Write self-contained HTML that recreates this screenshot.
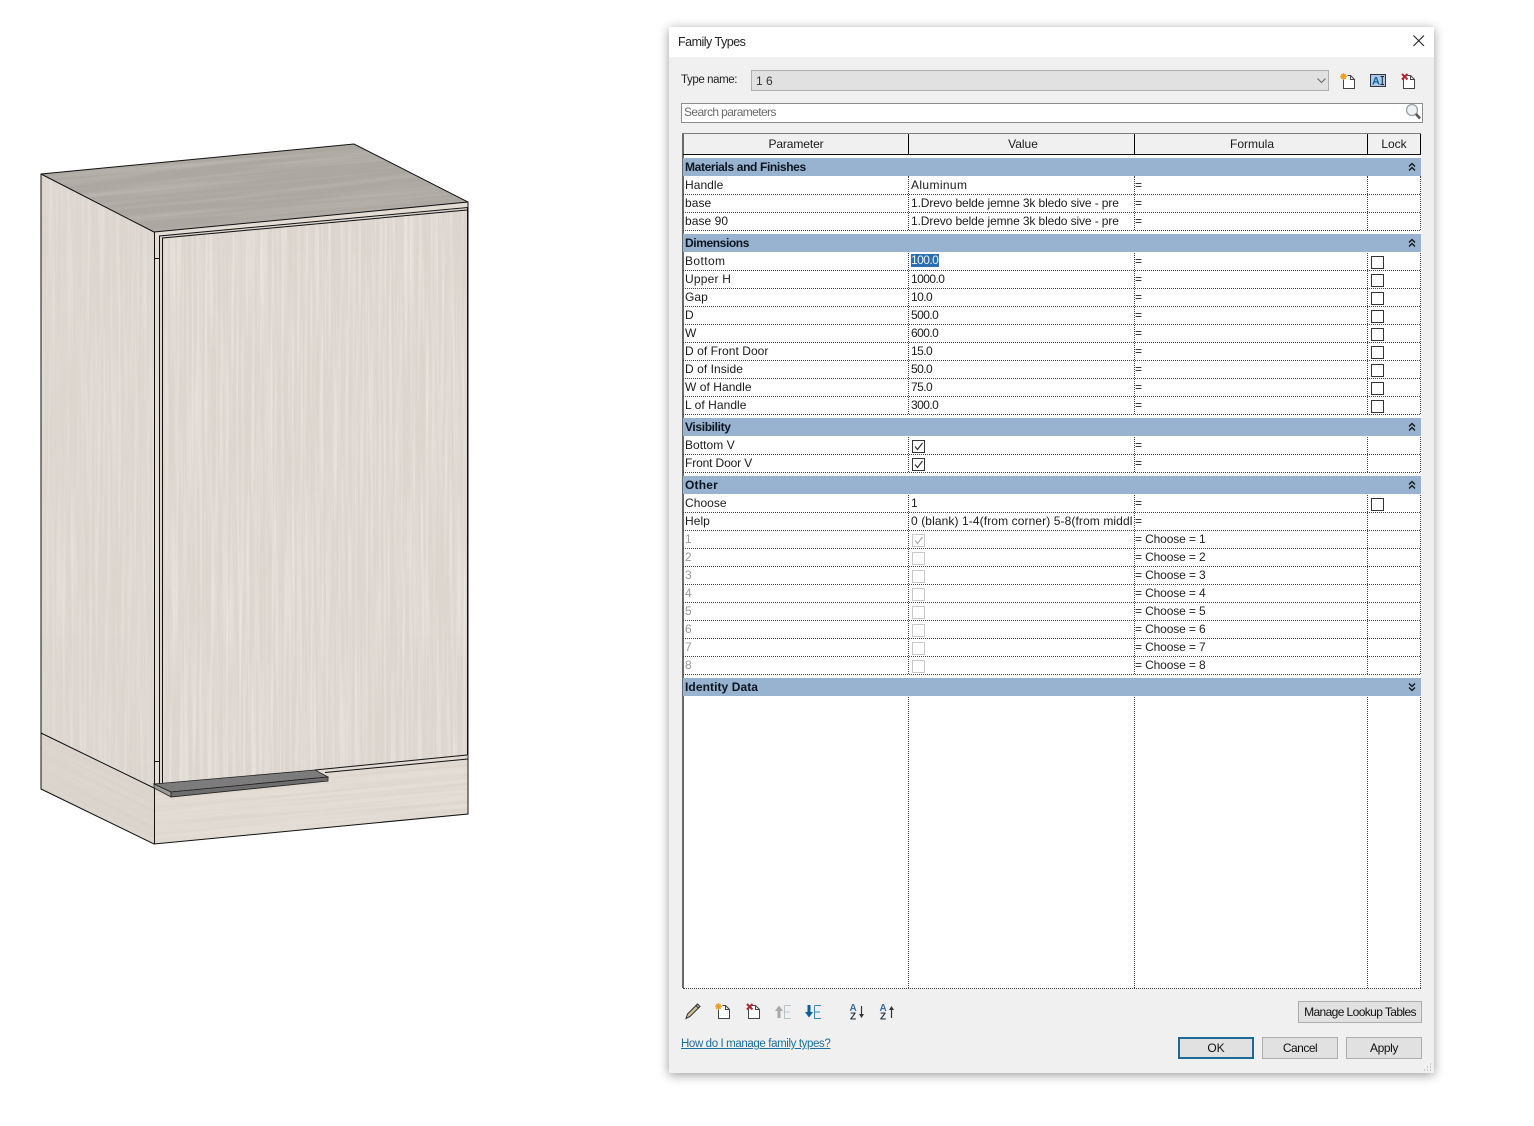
<!DOCTYPE html>
<html><head><meta charset="utf-8"><title>Family Types</title>
<style>
html,body{margin:0;padding:0;background:#fff;width:1534px;height:1126px;overflow:hidden}
body{font-family:"Liberation Sans",sans-serif;font-size:12px;color:#1a1a1a;position:relative}
.a{position:absolute;white-space:nowrap}
#dlg{position:absolute;left:669px;top:27px;width:765px;height:1046px;background:#f0f0f0;box-shadow:0 2px 10px rgba(0,0,0,.4)}
#tb{position:absolute;left:669px;top:27px;width:765px;height:30px;background:#fff}
.bar{position:absolute;left:683px;width:738px;height:18px;background:#98b3cf;font-weight:bold;line-height:18px;text-indent:2px;color:#0c1420;letter-spacing:-.36px}
.r{position:absolute;left:683px;width:737px;height:18px;line-height:18px;border-bottom:1px dotted #444}
.r span{position:absolute;top:0;white-space:nowrap;letter-spacing:.05px}
.p{left:2px}.v{left:228px}.f{left:452px}
.r span.n{letter-spacing:-.55px}
.r span.m{letter-spacing:-.11px}
.r span.t{letter-spacing:-.13px}
.g span{color:#999}.r.g span.f{color:#222;letter-spacing:-.13px}
.vl{position:absolute;top:176px;height:812px;border-left:1px dotted #444}
.h{position:absolute;top:134px;height:20px;line-height:20px;text-align:center;background:#f0f0f0;border-right:1px solid #000;box-sizing:border-box}
.cb{position:absolute;width:11px;height:11px;border:1px solid #333;background:#fff}
.cb.d{border-color:#c8c8c8}
.cb svg{position:absolute;left:0;top:0}
.btn{position:absolute;background:#e1e1e1;border:1px solid #adadad;box-sizing:border-box;text-align:center;color:#111;white-space:nowrap}
</style></head><body>

<svg class="a" style="left:0;top:0" width="660" height="900" viewBox="0 0 660 900">
<defs>
<filter id="wv" x="0" y="0" width="100%" height="100%"><feTurbulence type="fractalNoise" baseFrequency="0.38 0.006" numOctaves="3" seed="5"/><feColorMatrix values="0 0 0 0 .96  0 0 0 0 .93  0 0 0 0 .89  2 0 0 0 -.8"/></filter>
<filter id="wd" x="0" y="0" width="100%" height="100%"><feTurbulence type="fractalNoise" baseFrequency="0.25 0.004" numOctaves="2" seed="17"/><feColorMatrix values="0 0 0 0 .68  0 0 0 0 .63  0 0 0 0 .58  2 0 0 0 -.85"/></filter>
<filter id="wh" x="0" y="0" width="100%" height="100%"><feTurbulence type="fractalNoise" baseFrequency="0.005 0.3" numOctaves="3" seed="9"/><feColorMatrix values="0 0 0 0 .66  0 0 0 0 .61  0 0 0 0 .54  2.2 0 0 0 -.85"/></filter>
<filter id="wt" x="0" y="0" width="100%" height="100%"><feTurbulence type="fractalNoise" baseFrequency="0.005 0.25" numOctaves="2" seed="3"/><feColorMatrix values="0 0 0 0 .76  0 0 0 0 .73  0 0 0 0 .69  2 0 0 0 -.85"/></filter>
<clipPath id="cs"><polygon points="41,174 154,232 154,788 41,733"/></clipPath>
<clipPath id="cf"><polygon points="162,238 467,210 467,756 162,784"/></clipPath>
<clipPath id="cb"><polygon points="154,787 468,757 468,814 154,844"/></clipPath>
<clipPath id="cl"><polygon points="41,733 154,788 154,844 41,789"/></clipPath>
<clipPath id="ct"><polygon points="41,174 354,144 468,202 154,232"/></clipPath>
</defs>
<polygon points="41,174 354,144 468,202 154,232" fill="#aca8a1"/>
<polygon points="41,174 154,232 154,844 41,789" fill="#dcd6cf"/>
<polygon points="154,232 468,202 468,814 154,844" fill="#e3ddd5"/>
<polygon points="160,236 467,208 467,756 160,785" fill="#dcd6cf"/>
<g clip-path="url(#ct)"><rect x="0" y="0" width="430" height="72" transform="translate(41 174) skewY(-5.4)" filter="url(#wt)" opacity=".3"/></g>
<g clip-path="url(#cs)"><rect x="41" y="174" width="113" height="620" filter="url(#wv)" opacity=".35"/><rect x="41" y="174" width="113" height="620" filter="url(#wd)" opacity=".15"/></g>
<g clip-path="url(#cf)"><rect x="160" y="207" width="308" height="582" filter="url(#wv)" opacity=".5"/><rect x="160" y="207" width="308" height="582" filter="url(#wd)" opacity=".22"/></g>
<g clip-path="url(#cb)"><rect x="0" y="0" width="316" height="60" transform="translate(154 786) skewY(-5.4)" filter="url(#wh)" opacity=".55"/></g>
<g clip-path="url(#cl)"><rect x="0" y="-5" width="114" height="65" transform="translate(41 733) skewY(26.500)" filter="url(#wh)" opacity=".5"/></g>
<g fill="none" stroke="#111" stroke-width="1">
<polygon points="41,174 354,144 468,202 468,814 154,844 41,789"/>
<line x1="41" y1="174" x2="154" y2="232"/>
<line x1="154" y1="232" x2="468" y2="202"/>
<line x1="154.500" y1="232" x2="154.500" y2="844"/>
<line x1="41" y1="733" x2="154" y2="788"/>
<polyline points="159.500,785 159.500,236 467.500,207.500 467.500,755"/>
<polyline points="162.500,783 162.500,238 467,210"/>
<line x1="154" y1="258.500" x2="159" y2="258.500"/>
<line x1="154" y1="761.500" x2="159" y2="761.500"/>
<line x1="315" y1="770" x2="467" y2="755"/>
<line x1="325" y1="772.500" x2="468" y2="759"/>
</g>
<polygon points="154,784 315,770 328,777 171,792" fill="#7c7c7c" stroke="#222" stroke-width=".8"/>
<polygon points="154,784 171,792 171,797 154,788" fill="#9a9a96" stroke="#222" stroke-width=".8"/>
<polygon points="171,792 328,777 328,781 171,797" fill="#6d6d6d" stroke="#222" stroke-width=".8"/>
</svg>

<div id="dlg"></div>
<div id="tb"></div>
<div class="a" style="left:678px;top:34px;line-height:16px;font-size:12.500px;color:#222;letter-spacing:-.5px">Family Types</div>
<svg class="a" style="left:1412px;top:34px" width="14" height="14"><path d="M1.500 1.500 12 12M12 1.500 1.500 12" stroke="#222" stroke-width="1.100"/></svg>

<div class="a" style="left:681px;top:72px;line-height:16px;font-size:11.500px;color:#222;letter-spacing:-.4px">Type name:</div>
<div class="a" style="left:751px;top:70px;width:578px;height:21px;background:#e1e1e1;border:1px solid #adadad;box-sizing:border-box;line-height:20px;text-indent:4px;color:#333">1 6</div>
<svg class="a" style="left:1316px;top:76px" width="12" height="10"><path d="M1.500 2.500 5.500 6.500 9.500 2.500" fill="none" stroke="#666"/></svg>

<svg class="a" style="left:1339px;top:72px" width="18" height="18"><path d="M4.500 6.500V16.500H15.500V7.500L11.500 3.500H8.500M11.500 3.500V7.500H15.500" fill="#fff" stroke="#444"/><circle cx="4.500" cy="4.500" r="3" fill="#f4b64a"/><path d="M1 4.500H8M4.500 1V8M2 2 7 7M7 2 2 7" stroke="#e79a2a" stroke-width=".8"/></svg>
<svg class="a" style="left:1369px;top:72px" width="18" height="16"><rect x="1.500" y="2.500" width="15" height="12" fill="#a9cbe8" stroke="#334"/><text x="3" y="12.500" font-family="Liberation Sans" font-weight="bold" font-size="11" fill="#16609c">A</text><path d="M11.500 4.500H15M13.250 4.500V12.500M11.500 12.500H15" stroke="#222" fill="none"/></svg>
<svg class="a" style="left:1399px;top:72px" width="18" height="18"><path d="M4.500 6.500V16.500H15.500V7.500L11.500 3.500H8.500M11.500 3.500V7.500H15.500" fill="#fff" stroke="#444"/><path d="M3 2 8.500 7.500M8.500 2 3 7.500" stroke="#b3242c" stroke-width="2"/></svg>

<div class="a" style="left:681px;top:103px;width:742px;height:20px;background:#fff;border:1px solid #8c8c8c;box-sizing:border-box;line-height:17px;text-indent:2px;color:#6b6b6b;letter-spacing:-.6px">Search parameters</div>
<svg class="a" style="left:1404px;top:103px" width="18" height="18"><circle cx="8" cy="7" r="5.500" fill="#eef2f4" stroke="#9aa2a8" stroke-width="1.300"/><path d="M12 11 16 15.500" stroke="#555" stroke-width="2.600"/></svg>

<div class="a" style="left:682px;top:133px;width:739px;height:855px;background:#fff;box-sizing:border-box;border-left:2px solid #6a6a6a;border-top:2px solid #7c7c7c"></div>
<div class="a" style="left:1420px;top:176px;height:812px;border-left:1px dotted #444"></div>
<div class="a" style="left:683px;top:988px;width:738px;border-top:1px dotted #444"></div>

<div class="h" style="left:684px;width:225px;letter-spacing:-.1px">Parameter</div>
<div class="h" style="left:909px;width:228px;border-right:0">Value</div>
<div class="h" style="left:1135px;width:233px;padding-left:2px">Formula</div>
<div class="h" style="left:1368px;width:53px">Lock</div>
<div class="a" style="left:1134px;top:134px;width:1px;height:20px;background:#000"></div>
<div class="a" style="left:683px;top:154px;width:738px;height:1px;background:#111"></div>

<div class="vl" style="left:908px"></div>
<div class="vl" style="left:1134px"></div>
<div class="vl" style="left:1367px"></div>

<div class="bar" style="top:158px">Materials and Finishes</div>
<div class="r" style="top:176px"><span class="p">Handle</span><span class="v" style="letter-spacing:.37px">Aluminum</span><span class="f">=</span></div>
<div class="r" style="top:194px"><span class="p">base</span><span class="v m">1.Drevo belde jemne 3k bledo sive - pre</span><span class="f">=</span></div>
<div class="r" style="top:212px"><span class="p">base 90</span><span class="v m">1.Drevo belde jemne 3k bledo sive - pre</span><span class="f">=</span></div>

<div class="bar" style="top:234px;letter-spacing:-.4px">Dimensions</div>
<div class="r" style="top:252px"><span class="p" style="letter-spacing:.4px">Bottom</span><span class="v n" style="background:#2a6fb0;color:#e8f0f8;top:2px;height:13px;line-height:13px;padding-right:1px">100.0</span><span class="f">=</span></div>
<div class="r" style="top:270px"><span class="p" style="letter-spacing:.2px">Upper H</span><span class="v n">1000.0</span><span class="f">=</span></div>
<div class="r" style="top:288px"><span class="p">Gap</span><span class="v n">10.0</span><span class="f">=</span></div>
<div class="r" style="top:306px"><span class="p">D</span><span class="v n">500.0</span><span class="f">=</span></div>
<div class="r" style="top:324px"><span class="p">W</span><span class="v n">600.0</span><span class="f">=</span></div>
<div class="r" style="top:342px"><span class="p">D of Front Door</span><span class="v n">15.0</span><span class="f">=</span></div>
<div class="r" style="top:360px"><span class="p">D of Inside</span><span class="v n">50.0</span><span class="f">=</span></div>
<div class="r" style="top:378px"><span class="p">W of Handle</span><span class="v n">75.0</span><span class="f">=</span></div>
<div class="r" style="top:396px"><span class="p">L of Handle</span><span class="v n">300.0</span><span class="f">=</span></div>

<div class="bar" style="top:418px">Visibility</div>
<div class="r" style="top:436px"><span class="p">Bottom V</span><span class="f">=</span></div>
<div class="r" style="top:454px"><span class="p t">Front Door V</span><span class="f">=</span></div>

<div class="bar" style="top:476px;letter-spacing:.2px">Other</div>
<div class="r" style="top:494px"><span class="p">Choose</span><span class="v">1</span><span class="f">=</span></div>
<div class="r" style="top:512px"><span class="p">Help</span><span class="v" style="letter-spacing:.1px">0 (blank) 1-4(from corner) 5-8(from middl</span><span class="f">=</span></div>
<div class="r g" style="top:530px"><span class="p">1</span><span class="f">= Choose = 1</span></div>
<div class="r g" style="top:548px"><span class="p">2</span><span class="f">= Choose = 2</span></div>
<div class="r g" style="top:566px"><span class="p">3</span><span class="f">= Choose = 3</span></div>
<div class="r g" style="top:584px"><span class="p">4</span><span class="f">= Choose = 4</span></div>
<div class="r g" style="top:602px"><span class="p">5</span><span class="f">= Choose = 5</span></div>
<div class="r g" style="top:620px"><span class="p">6</span><span class="f">= Choose = 6</span></div>
<div class="r g" style="top:638px"><span class="p">7</span><span class="f">= Choose = 7</span></div>
<div class="r g" style="top:656px"><span class="p">8</span><span class="f">= Choose = 8</span></div>

<div class="bar" style="top:678px;letter-spacing:.08px">Identity Data</div>

<div class="a" style="left:684px;top:231px;width:737px;height:3px;background:#fff"></div>
<div class="a" style="left:684px;top:415px;width:737px;height:3px;background:#fff"></div>
<div class="a" style="left:684px;top:473px;width:737px;height:3px;background:#fff"></div>
<div class="a" style="left:684px;top:675px;width:737px;height:3px;background:#fff"></div>

<svg class="a" style="left:1407px;top:162px" width="10" height="10"><path d="M2 4.500 5 1.500 8 4.500M2 8.500 5 5.500 8 8.500" fill="none" stroke="#111" stroke-width="1.300"/></svg>
<svg class="a" style="left:1407px;top:238px" width="10" height="10"><path d="M2 4.500 5 1.500 8 4.500M2 8.500 5 5.500 8 8.500" fill="none" stroke="#111" stroke-width="1.300"/></svg>
<svg class="a" style="left:1407px;top:422px" width="10" height="10"><path d="M2 4.500 5 1.500 8 4.500M2 8.500 5 5.500 8 8.500" fill="none" stroke="#111" stroke-width="1.300"/></svg>
<svg class="a" style="left:1407px;top:480px" width="10" height="10"><path d="M2 4.500 5 1.500 8 4.500M2 8.500 5 5.500 8 8.500" fill="none" stroke="#111" stroke-width="1.300"/></svg>
<svg class="a" style="left:1407px;top:682px" width="10" height="10"><path d="M2 1.500 5 4.500 8 1.500M2 5.500 5 8.500 8 5.500" fill="none" stroke="#111" stroke-width="1.300"/></svg>

<div class="cb" style="left:1371px;top:256px"></div>
<div class="cb" style="left:1371px;top:274px"></div>
<div class="cb" style="left:1371px;top:292px"></div>
<div class="cb" style="left:1371px;top:310px"></div>
<div class="cb" style="left:1371px;top:328px"></div>
<div class="cb" style="left:1371px;top:346px"></div>
<div class="cb" style="left:1371px;top:364px"></div>
<div class="cb" style="left:1371px;top:382px"></div>
<div class="cb" style="left:1371px;top:400px"></div>
<div class="cb" style="left:1371px;top:498px"></div>

<div class="cb" style="left:912px;top:440px"><svg width="11" height="11"><path d="M2 5.500 4.500 8.500 9.500 2" fill="none" stroke="#333" stroke-width="1.200"/></svg></div>
<div class="cb" style="left:912px;top:458px"><svg width="11" height="11"><path d="M2 5.500 4.500 8.500 9.500 2" fill="none" stroke="#333" stroke-width="1.200"/></svg></div>
<div class="cb d" style="left:912px;top:534px"><svg width="11" height="11"><path d="M2 5.500 4.500 8.500 9.500 2" fill="none" stroke="#aaa" stroke-width="1.200"/></svg></div>
<div class="cb d" style="left:912px;top:552px"></div>
<div class="cb d" style="left:912px;top:570px"></div>
<div class="cb d" style="left:912px;top:588px"></div>
<div class="cb d" style="left:912px;top:606px"></div>
<div class="cb d" style="left:912px;top:624px"></div>
<div class="cb d" style="left:912px;top:642px"></div>
<div class="cb d" style="left:912px;top:660px"></div>

<svg class="a" style="left:684px;top:1002px" width="18" height="18"><path d="M2 16.500 3.500 12 13.500 2 16 4.500 6 14.500Z" fill="#cbbf96" stroke="#333"/><path d="M12 3.500 14.500 6" stroke="#333"/></svg>
<svg class="a" style="left:714px;top:1002px" width="18" height="18"><path d="M4.500 6.500V16.500H15.500V7.500L11.500 3.500H8.500M11.500 3.500V7.500H15.500" fill="#fff" stroke="#444"/><circle cx="4.500" cy="4.500" r="3" fill="#f4b64a"/><path d="M1 4.500H8M4.500 1V8M2 2 7 7M7 2 2 7" stroke="#e79a2a" stroke-width=".8"/></svg>
<svg class="a" style="left:744px;top:1002px" width="18" height="18"><path d="M4.500 6.500V16.500H15.500V7.500L11.500 3.500H8.500M11.500 3.500V7.500H15.500" fill="#fff" stroke="#444"/><path d="M3 2 8.500 7.500M8.500 2 3 7.500" stroke="#b3242c" stroke-width="2"/></svg>
<svg class="a" style="left:774px;top:1002px" width="18" height="18"><path d="M5 16V8" stroke="#a8a8a8" stroke-width="3"/><path d="M1 9 5 3.500 9 9Z" fill="#a8a8a8"/><path d="M10.500 3.500H17M10.500 3.500V16.500H17M10.500 10H16" fill="none" stroke="#b8c4cc"/></svg>
<svg class="a" style="left:804px;top:1002px" width="18" height="18"><path d="M5 3V11" stroke="#0f5f96" stroke-width="3"/><path d="M1 10 5 15.500 9 10Z" fill="#0f5f96"/><path d="M10.500 3.500H17M10.500 3.500V16.500H17M10.500 10H16" fill="none" stroke="#3a88b5"/></svg>
<svg class="a" style="left:849px;top:1002px" width="18" height="18"><text x="0.500" y="9" font-family="Liberation Sans" font-weight="bold" font-size="10" fill="#3a6e9a">A</text><text x="1" y="17.500" font-family="Liberation Sans" font-weight="bold" font-size="10" fill="#2a3a48">Z</text><path d="M12.500 4V13" stroke="#333" stroke-width="1.200"/><path d="M10 12 12.500 16 15 12Z" fill="#333"/></svg>
<svg class="a" style="left:879px;top:1002px" width="18" height="18"><text x="0.500" y="9" font-family="Liberation Sans" font-weight="bold" font-size="10" fill="#3a6e9a">A</text><text x="1" y="17.500" font-family="Liberation Sans" font-weight="bold" font-size="10" fill="#2a3a48">Z</text><path d="M12.500 16V7" stroke="#333" stroke-width="1.200"/><path d="M10 8 12.500 4 15 8Z" fill="#333"/></svg>

<div class="a" style="left:681px;top:1036px;line-height:16px;color:#1b6f9f;text-decoration:underline;font-size:11.500px;letter-spacing:-.38px">How do I manage family types?</div>

<div class="btn" style="left:1298px;top:1001px;width:124px;height:22px;line-height:20px;letter-spacing:-.6px">Manage Lookup Tables</div>
<div class="btn" style="left:1178px;top:1037px;width:76px;height:22px;line-height:18px;border:2px solid #1f6a94">OK</div>
<div class="btn" style="left:1262px;top:1037px;width:76px;height:22px;line-height:20px;letter-spacing:-.5px">Cancel</div>
<div class="btn" style="left:1346px;top:1037px;width:76px;height:22px;line-height:20px;letter-spacing:-.4px">Apply</div>
<svg class="a" style="left:1423px;top:1062px" width="10" height="10"><path d="M7.500 1.500v1M4.500 4.500v1M7.500 4.500v1M1.500 7.500v1M4.500 7.500v1M7.500 7.500v1" stroke="#aaa"/></svg>
</body></html>
